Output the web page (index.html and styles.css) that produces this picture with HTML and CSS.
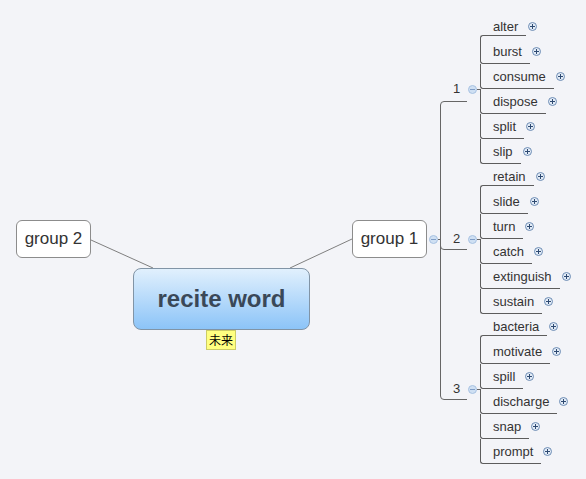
FILE: index.html
```html
<!DOCTYPE html>
<html>
<head>
    <title>recite word</title>
    <link rel="stylesheet" href="styles.css">
</head>
<body>
    <div class="map">
        <svg class="links" width="586" height="479">
            <path class="diag" d="M91 240 L153 268 M290 268 L352 239"/>
            <path d="M438 239.5 H440.5 M467 101.5 H444 Q440.5 101.5 440.5 105 V396 Q440.5 399.5 444 399.5 H467 M440.5 246 Q440.5 249.5 444 249.5 H467"/>
        </svg>

        <div class="topic group2">group 2</div>
        <div class="central">recite word<span class="tag">未来</span></div>
        <div class="topic group1">group 1<span class="fold"></span></div>

        <div class="subtree">
            <div class="branch">
                <div class="mid"><span class="num">1</span><span class="fold"></span><span class="tick"></span></div>
                <div class="leaves">
                    <div class="leaf"><span class="word">alter</span><span class="plus"></span></div>
                    <div class="leaf"><span class="word">burst</span><span class="plus"></span></div>
                    <div class="leaf"><span class="word">consume</span><span class="plus"></span></div>
                    <div class="leaf"><span class="word">dispose</span><span class="plus"></span></div>
                    <div class="leaf"><span class="word">split</span><span class="plus"></span></div>
                    <div class="leaf"><span class="word">slip</span><span class="plus"></span></div>
                </div>
            </div>
            <div class="branch">
                <div class="mid"><span class="num">2</span><span class="fold"></span><span class="tick"></span></div>
                <div class="leaves">
                    <div class="leaf"><span class="word">retain</span><span class="plus"></span></div>
                    <div class="leaf"><span class="word">slide</span><span class="plus"></span></div>
                    <div class="leaf"><span class="word">turn</span><span class="plus"></span></div>
                    <div class="leaf"><span class="word">catch</span><span class="plus"></span></div>
                    <div class="leaf"><span class="word">extinguish</span><span class="plus"></span></div>
                    <div class="leaf"><span class="word">sustain</span><span class="plus"></span></div>
                </div>
            </div>
            <div class="branch">
                <div class="mid"><span class="num">3</span><span class="fold"></span><span class="tick"></span></div>
                <div class="leaves">
                    <div class="leaf"><span class="word">bacteria</span><span class="plus"></span></div>
                    <div class="leaf"><span class="word">motivate</span><span class="plus"></span></div>
                    <div class="leaf"><span class="word">spill</span><span class="plus"></span></div>
                    <div class="leaf"><span class="word">discharge</span><span class="plus"></span></div>
                    <div class="leaf"><span class="word">snap</span><span class="plus"></span></div>
                    <div class="leaf"><span class="word">prompt</span><span class="plus"></span></div>
                </div>
            </div>
        </div>
    </div>
</body>
</html>
```

FILE: styles.css
```css
body {
    margin: 0;
    background: #f3f4f8;
    font-family: "Liberation Sans", Arial, sans-serif;
    color: #333;
}
.map {
    position: relative;
    width: 586px;
    height: 479px;
    overflow: hidden;
}
.links {
    position: absolute;
    left: 0;
    top: 0;
}
.links path {
    fill: none;
    stroke: #666;
    stroke-width: 1;
}
.links .diag {
    stroke: #7f7f7f;
}

/* main topics */
.topic {
    position: absolute;
    top: 220px;
    width: 75px;
    height: 38px;
    box-sizing: border-box;
    background: white;
    border: 1px solid #8c8c8c;
    border-radius: 6px;
    font-size: 17px;
    line-height: 36px;
    text-align: center;
}
.group2 {
    left: 16px;
}
.group1 {
    left: 352px;
}
.group1 .fold {
    position: absolute;
    left: 76px;
    top: 14px;
}
.central {
    position: absolute;
    left: 133px;
    top: 268px;
    width: 177px;
    height: 62px;
    box-sizing: border-box;
    border: 1px solid #8194a6;
    border-radius: 8px;
    background: linear-gradient(#e1f0fd, #8cc4f8);
    font-size: 24px;
    font-weight: bold;
    line-height: 60px;
    text-align: center;
    color: #3a4858;
}
.tag {
    position: absolute;
    left: 72px;
    top: 61px;
    width: 30px;
    height: 20px;
    box-sizing: border-box;
    background: #ffff80;
    border: 1px solid #cccc66;
    font-family: "Noto Sans CJK SC", sans-serif;
    font-size: 12px;
    font-weight: normal;
    line-height: 18px;
    color: #000;
}

/* fold / unfold buttons */
.fold, .plus {
    display: block;
    position: relative;
    width: 9px;
    height: 9px;
    box-sizing: border-box;
    border-radius: 50%;
}
.fold {
    background: #cfe0f3;
    border: 1px solid #a8c2e2;
}
.fold::before, .plus::before, .plus::after {
    content: "";
    position: absolute;
}
.fold::before {
    left: 1px;
    top: 3px;
    width: 5px;
    height: 1px;
    background: #7e9cc6;
}
.plus {
    flex: none;
    margin: 8px 0 0 2px;
    background: #e2ebf6;
    border: 1px solid #6e8db5;
}
.plus::before {
    left: 1px;
    top: 3px;
    width: 5px;
    height: 1px;
    background: #2e4a72;
}
.plus::after {
    left: 3px;
    top: 1px;
    width: 1px;
    height: 5px;
    background: #2e4a72;
}

/* right subtree */
.subtree {
    position: absolute;
    left: 440px;
    top: 14px;
    display: flex;
    flex-direction: column;
}
.branch {
    display: flex;
    align-items: flex-start;
}
.mid {
    display: flex;
    align-items: center;
    width: 40px;
    height: 16px;
    margin-top: 67px;
}
.num {
    width: 27px;
    padding-left: 13px;
    box-sizing: border-box;
    font-size: 13px;
    line-height: 16px;
}
.mid .fold {
    margin-left: 1px;
}
.tick {
    width: 3px;
    height: 1px;
    background: #666;
}
.leaves {
    display: flex;
    flex-direction: column;
}
.leaf {
    display: flex;
    align-items: flex-start;
}
.word {
    position: relative;
    display: block;
    padding: 5px 8px 3px 13px;
    font-size: 13px;
    line-height: 16px;
    border-bottom: 1px solid #5c5c5c;
}
.leaf + .leaf .word {
    padding-left: 12px;
    border-left: 1px solid #5c5c5c;
    border-bottom-left-radius: 3px;
}
.leaf:first-child .word {
    border-bottom-color: transparent;
}
.leaf:first-child .word::before {
    content: "";
    position: absolute;
    left: 0;
    right: 0;
    bottom: -1px;
    height: 3px;
    border-top: 1px solid #5c5c5c;
    border-left: 1px solid #5c5c5c;
    border-top-left-radius: 3px;
}
```
